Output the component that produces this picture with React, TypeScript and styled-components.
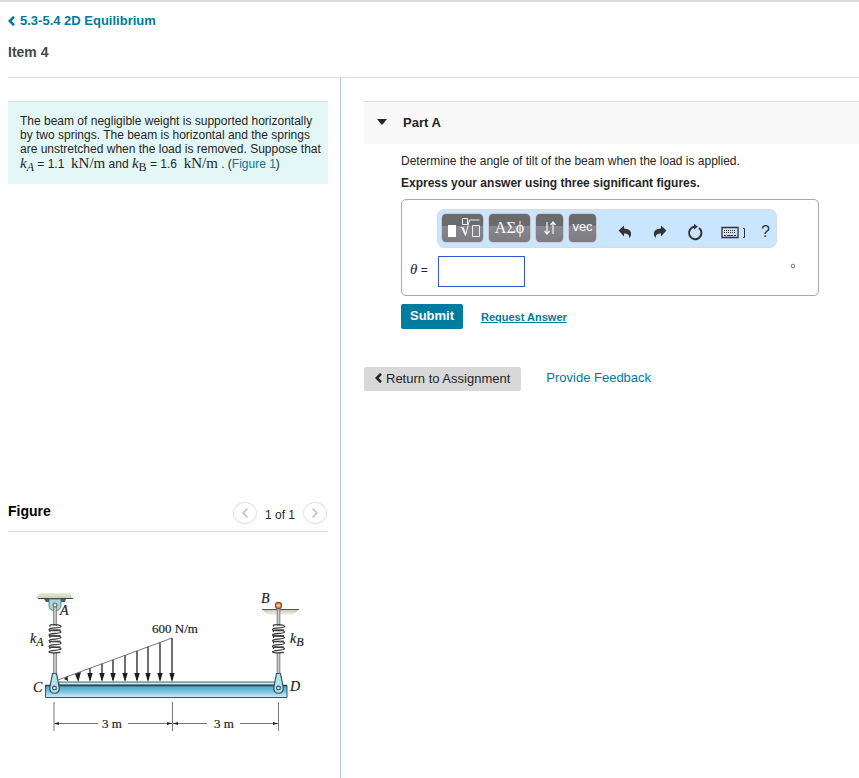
import React, { useState } from "react";
import styled, { createGlobalStyle, css } from "styled-components";

const GlobalStyle = createGlobalStyle`
  * { box-sizing: border-box; }
  body {
    margin: 0;
    background: #fff;
    color: #252525;
    font-family: "Liberation Sans", Arial, sans-serif;
    font-size: 12px;
    line-height: 14px;
  }
  button, input { font-family: inherit; }
  h1, h2, p { margin: 0; }
`;

const teal = "#007a9c";

const Page = styled.div`
  display: flex;
  flex-direction: column;
  min-height: 100vh;
  border-top: 2px solid #dcdcdc;
`;

const Header = styled.header`
  margin-left: 8px;
  height: 76px;
  padding-top: 11px;
  border-bottom: 1px solid #dcdfe0;
`;

const BackLink = styled.a`
  display: flex;
  align-items: center;
  gap: 5px;
  width: fit-content;
  color: ${teal};
  font-size: 13px;
  line-height: 16px;
  font-weight: bold;
  text-decoration: none;
`;

const ItemTitle = styled.h1`
  margin-top: 14px;
  color: #474747;
  font-size: 14px;
  line-height: 18px;
`;

const Columns = styled.div`
  flex: 1;
  display: grid;
  grid-template-columns: 341px minmax(0, 1fr);
`;

const ProblemColumn = styled.section`
  display: flex;
  flex-direction: column;
  padding: 23px 12px 0 8px;
  border-right: 1px solid #b5cde0;
`;

const Prompt = styled.div`
  padding: 12px 12px 13px;
  border-top: 1px solid #d5dede;
  background: #e3f7f7;
`;

const PromptText = styled.p`
  white-space: nowrap;
`;

const MathText = styled.span`
  font-family: "Liberation Serif", "Times New Roman", serif;
  font-size: 15px;
  line-height: 14px;

  sub {
    font-size: 12px;
    line-height: 0;
    vertical-align: -3px;
  }
`;

const TextLink = styled.a`
  color: ${teal};
  text-decoration: none;
`;

const FigurePanel = styled.section`
  margin-top: auto;
  height: 280px;
`;

const FigureHeader = styled.div`
  display: flex;
  align-items: center;
  height: 34px;
  padding: 0 1px 3px 0;
  border-bottom: 1px solid #dcdfe0;
`;

const FigureTitle = styled.h2`
  margin: 0 auto 4px 0;
  color: #000;
  font-size: 14px;
  line-height: 18px;
`;

const PageCount = styled.span`
  padding: 3px 8px 0;
`;

const PagerButton = styled.button`
  display: grid;
  place-items: center;
  width: 24px;
  height: 22px;
  padding: 0;
  border: 1px solid #e2e2e2;
  border-radius: 50%;
  background: #fff;
`;

const Diagram = styled.svg`
  display: block;
  width: 100%;
  margin-top: 48px;

  text {
    font-family: "Liberation Serif", "Times New Roman", serif;
    font-size: 13px;
    fill: #231f20;
    stroke: #231f20;
    stroke-width: 0.2px;
  }
  text.symbol { font-style: italic; font-size: 14px; }
`;

const AnswerColumn = styled.main`
  padding: 23px 0 0 23px;
`;

const PartHeader = styled.button`
  display: flex;
  align-items: center;
  gap: 16px;
  width: 100%;
  height: 43px;
  padding: 0 13px 2px;
  border: 0;
  border-top: 1px solid #dcdfe0;
  background: #f9f9f9;
  color: #252525;
  font-size: 13px;
  font-weight: bold;
`;

const PartBody = styled.div`
  padding: 6px 40px 0 37px;
`;

const Paragraph = styled.p<{ $strong?: boolean }>`
  padding: 4px 0;
  margin-bottom: ${(p) => (p.$strong ? 5 : 0)}px;
  font-weight: ${(p) => (p.$strong ? "bold" : "normal")};
`;

const AnswerBox = styled.div`
  height: 97px;
  padding: 9px 10px 8px 8px;
  border: 1px solid #a9a9a9;
  border-radius: 5px;
`;

const Toolbar = styled.div`
  display: flex;
  align-items: center;
  width: 340px;
  height: 39px;
  margin-left: 27px;
  padding: 0 4px 1px 3px;
  border: 1px solid #dadada;
  border-radius: 7px;
  background: #c9e5ff;
`;

const MathButton = styled.button<{ $wide?: boolean }>`
  display: grid;
  place-items: center;
  width: ${(p) => (p.$wide ? 43 : 29)}px;
  height: 30px;
  margin-right: 4px;
  padding: 0;
  border: 1px solid #c9cbce;
  border-radius: 5px;
  background: linear-gradient(#6b6b6d 0 42%, #89888f 42%, #7c7b82);
  color: #fff;
  font-size: 13px;
  line-height: 16px;
`;

const Greek = styled.span`
  font-family: "Liberation Serif", "Times New Roman", serif;
  font-size: 16px;
`;

const VecLabel = styled.span`
  padding-bottom: 3px;
`;

const ActionIcons = styled.div`
  display: flex;
  align-items: center;
  gap: 13px;
  flex: 1;
  padding: 7px 2px 0 13px;
`;

const IconButton = styled.button`
  display: grid;
  place-items: center;
  min-width: 22px;
  height: 20px;
  padding: 0;
  border: 0;
  background: none;
  color: #333;
  font-size: 16px;

  &:last-child {
    min-width: 0;
    margin-left: auto;
  }
`;

const AnswerRow = styled.div`
  display: flex;
  align-items: center;
  height: 32px;
  margin-top: 7px;
`;

const ThetaLabel = styled.label`
  width: 28px;
  padding-bottom: 3px;
  i {
    font-family: "Liberation Serif", "Times New Roman", serif;
    font-size: 15px;
  }
`;

const AnswerInput = styled.input`
  width: 87px;
  height: 31px;
  padding: 4px 6px;
  border: 1px solid #3159cf;
  border-radius: 0;
  font-size: 14px;
  outline: 0;
`;

const Unit = styled.span`
  display: flex;
  align-items: flex-start;
  height: 16px;
  margin: 0 12px 0 auto;
`;

const ActionRow = styled.div<{ $footer?: boolean }>`
  display: flex;
  align-items: center;
  gap: 18px;
  margin-top: 8px;
  ${(p) =>
    p.$footer &&
    css`
      gap: 25px;
      margin-top: 38px;
      font-size: 13px;
    `}
`;

const SubmitButton = styled.button`
  width: 62px;
  height: 25px;
  padding: 0 0 2px;
  border: 0;
  border-radius: 2px;
  background: #007c9f;
  color: #fff;
  font-size: 13px;
  font-weight: bold;
`;

const RequestLink = styled.a`
  color: ${teal};
  font-size: 11px;
  font-weight: bold;
`;

const ReturnButton = styled.button`
  display: flex;
  align-items: center;
  gap: 4px;
  height: 24px;
  padding: 0 11px 2px;
  border: 0;
  border-radius: 2px;
  background: #d8d8d8;
  color: #252525;
  font-size: 13px;
`;

const FeedbackLink = styled(TextLink)`
  padding-bottom: 2px;
`;

function BoldChevron() {
  return (
    <svg width="7" height="10" viewBox="0 0 7 10" fill="none" stroke="currentColor" strokeWidth="2.6" aria-hidden="true">
      <path d="M6 .8 1.8 5 6 9.2" />
    </svg>
  );
}

function ThinChevron({ direction }: { direction: "left" | "right" }) {
  return (
    <svg width="8" height="12" viewBox="0 0 8 12" fill="none" stroke="#b9b9b9" strokeWidth="1.4" aria-hidden="true">
      <path d={direction === "left" ? "M6.5 1.5 2 6l4.500 4.500" : "M1.500 1.500 6 6l-4.500 4.500"} />
    </svg>
  );
}

function CurvedArrow({ flip }: { flip?: boolean }) {
  return (
    <svg width="14" height="14" viewBox="0 0 14 14" fill="#333" aria-hidden="true">
      <path
        transform={flip ? "matrix(-1 0 0 1 14 0)" : undefined}
        d="M.6 5.500 6 .6v2.900c4.500 .1 7.100 2.200 7.100 5.300 0 1.900-.7 3.300-1.900 4.400.6-3.300-1.400-4.800-5.200-4.800v3Z"
      />
    </svg>
  );
}

function BeamArrow({ x, top }: { x: number; top: number }) {
  return (
    <g>
      <path d={`M${x} ${top}V680`} stroke="#333" strokeWidth={1.4} />
      <path d={`M${x} 682l-2.700-9h5.400Z`} fill="#1d1d1d" />
    </g>
  );
}

function Spring({ x }: { x: number }) {
  const turns = [0, 1, 2, 3, 4];
  return (
    <g>
      <path d={`M${x} 606v20M${x} 653v25`} stroke="#777" strokeWidth="3.600" />
      <path d={`M${x} 606v20M${x} 653v25`} stroke="#ccc" strokeWidth="1.800" />
      <g fill="none" stroke="#3d3d3d" strokeWidth="1.300" strokeLinecap="round">
        {turns.map((i) => {
          const y = 626 + i * 5.6;
          return (
            <path
              key={i}
              d={`M${x - 5} ${y}c-2-2.200 11-1.600 11 .4s-12 1-12 3c0 1.400 6 1.300 11 .600`}
            />
          );
        })}
      </g>
    </g>
  );
}

function Clevis({ x }: { x: number }) {
  return (
    <g stroke="#35515c" strokeWidth="1.200">
      <path d={`M${x - 2} 673.500h4l2.700 14a4.800 4.800 0 1 1-9.400 0Z`} fill="#b4e0ef" />
      <circle cx={x} cy="688" r="1.900" fill="#d8eff7" />
    </g>
  );
}

function BeamFigure() {
  const slope = (x: number) => 680 - ((x - 58) * 42) / 114;
  const arrows = [90, 102, 113, 125, 137, 148, 160, 172];
  return (
    <Diagram viewBox="8 580 320 160" role="img" aria-label="Beam CD supported by springs at A and B">
      <defs>
        <linearGradient id="beam" x2="0" y2="1">
          <stop offset="0" stopColor="#3ba3c6" />
          <stop offset=".5" stopColor="#7cc5de" />
          <stop offset="1" stopColor="#d6edf5" />
        </linearGradient>
        <linearGradient id="ceiling" x2="0" y2="1">
          <stop offset="0" stopColor="#e9e9dc" />
          <stop offset="1" stopColor="#c9cab5" />
        </linearGradient>
        <linearGradient id="ledge" x2="0" y2="1">
          <stop offset="0" stopColor="#c9cab5" />
          <stop offset="1" stopColor="#f4f4ec" />
        </linearGradient>
      </defs>

      <path d="M40 593h30l2 3-1 3H39q-5-1-1-4Z" fill="url(#ceiling)" />
      <path d="M38 598.500h35" stroke="#444" />
      <path d="M44 599h5v3h-3ZM61 599h5l-1 3h-4Z" fill="#41616b" />
      <path d="M49 599h12v6.500a6 5.500 0 0 1-12 0Z" fill="#a9d5d8" stroke="#48686e" strokeWidth=".8" />
      <Spring x={55} />
      <circle cx="55" cy="605" r="2" fill="#eee" stroke="#555" />

      <path d="M263 610h35q-2 5-10 5h-15q-8 0-10-5Z" fill="url(#ledge)" />
      <path d="M262 609.500h37" stroke="#555" />
      <Spring x={278.5} />
      <circle cx="278.500" cy="605.500" r="3" fill="#f5b58f" stroke="#964921" strokeWidth="1.400" />

      <path d="M59 682h218v3H59Z" fill="#c3e6f1" stroke="#4f666e" />
      <path d="M45.500 685.500h241.500v12H45.500Z" fill="url(#beam)" stroke="#3b5661" />
      <path d="M45 685.500h242" stroke="#234550" strokeWidth="1.500" />

      <path d="M58 680 172 638" stroke="#777" />
      <path d="m64 679 3.500-3 .5 5Z" fill="#222" />
      <path d="M78.300 682l-3.300-8 6-2Z" fill="#222" />
      {arrows.map((x) => (
        <BeamArrow key={x} x={x} top={slope(x)} />
      ))}
      <Clevis x={54.5} />
      <Clevis x={278.5} />

      <path
        d="M54 702v29M172.500 702v29M278.500 702v29M55 723.500h43M128 723.500h79M240 723.500h38"
        stroke="#777"
      />
      <path d="m54 723.500 5-1.500v3ZM172 723.500l-5-1.500v3ZM173 723.500l5-1.500v3ZM278 723.500l-5-1.500v3Z" fill="#222" />
      <text x="102" y="728">3 m</text>
      <text x="214" y="728">3 m</text>
      <text x="152" y="633">600 N/m</text>
      <text className="symbol" x="60" y="615">A</text>
      <text className="symbol" x="261" y="603">B</text>
      <text className="symbol" x="33" y="692">C</text>
      <text className="symbol" x="290" y="691">D</text>
      <text className="symbol" x="30" y="643">k<tspan fontSize="12" dy="3">A</tspan></text>
      <text className="symbol" x="290" y="643">k<tspan fontSize="12" dy="3">B</tspan></text>
    </Diagram>
  );
}

export default function App() {
  const [answer, setAnswer] = useState("");
  return (
    <>
      <GlobalStyle />
      <Page>
        <Header>
          <BackLink href="#assignment"><BoldChevron />5.3-5.4 2D Equilibrium</BackLink>
          <ItemTitle>Item 4</ItemTitle>
        </Header>
        <Columns>
          <ProblemColumn>
            <Prompt>
              <PromptText>
                The beam of negligible weight is supported horizontally<br />
                by two springs. The beam is horizontal and the springs<br />
                are unstretched when the load is removed. Suppose that<br />
                <MathText><i>k</i><sub><i>A</i></sub></MathText> = 1.1&nbsp; <MathText>kN/m</MathText> and{" "}
                <MathText><i>k</i><sub>B</sub></MathText> = 1.6&nbsp; <MathText>kN/m</MathText> . (<TextLink href="#figure">Figure 1</TextLink>)
              </PromptText>
            </Prompt>
            <FigurePanel id="figure">
              <FigureHeader>
                <FigureTitle>Figure</FigureTitle>
                <PagerButton aria-label="Previous figure"><ThinChevron direction="left" /></PagerButton>
                <PageCount>1 of 1</PageCount>
                <PagerButton aria-label="Next figure"><ThinChevron direction="right" /></PagerButton>
              </FigureHeader>
              <BeamFigure />
            </FigurePanel>
          </ProblemColumn>
          <AnswerColumn>
            <PartHeader aria-expanded="true">
              <svg width="10" height="6" viewBox="0 0 10 6" aria-hidden="true"><path d="M0 0h10L5.500 5.500h-1Z" fill="#252525" /></svg>
              Part A
            </PartHeader>
            <PartBody>
              <Paragraph>Determine the angle of tilt of the beam when the load is applied.</Paragraph>
              <Paragraph $strong>Express your answer using three significant figures.</Paragraph>
              <AnswerBox>
                <Toolbar role="toolbar" aria-label="Equation tools">
                  <MathButton $wide aria-label="Templates">
                    <svg width="36" height="24" viewBox="0 0 36 24" fill="none" stroke="#eee" aria-hidden="true">
                      <path d="M3 9h8v12H3Z" fill="#fff" stroke="none" />
                      <path d="M17.500 2.500h5v6h-5ZM27.500 9.500h7v11h-7ZM15.500 11.500h2l3 8 4-15.500h10" />
                      <path d="m17.500 11.500 3 7" strokeWidth="2" />
                    </svg>
                  </MathButton>
                  <MathButton $wide aria-label="Greek symbols"><Greek>ΑΣϕ</Greek></MathButton>
                  <MathButton aria-label="Sub and superscript">
                    <svg width="14" height="16" viewBox="0 0 14 16" fill="none" stroke="#f5f5f5" strokeWidth="1.200" aria-hidden="true">
                      <path d="M4 2v12M1.500 11 4 14l2.500-3M10 14V2M7.500 5 10 2l2.500 3" />
                    </svg>
                  </MathButton>
                  <MathButton><VecLabel>vec</VecLabel></MathButton>
                  <ActionIcons>
                    <IconButton aria-label="Undo"><CurvedArrow /></IconButton>
                    <IconButton aria-label="Redo"><CurvedArrow flip /></IconButton>
                    <IconButton aria-label="Reset">
                      <svg width="16" height="18" viewBox="0 0 16 18" fill="none" stroke="#333" aria-hidden="true">
                        <path d="M12 5A6.200 6.200 0 1 1 7.500 3.800" strokeWidth="2" />
                        <path d="m7 .8 3.800 2.900L7 6.500Z" fill="#333" stroke="none" />
                      </svg>
                    </IconButton>
                    <IconButton aria-label="Keyboard shortcuts">
                      <svg width="28" height="14" viewBox="-2 -2 28 14" fill="none" stroke="#333" aria-hidden="true">
                        <path d="M1 .5h16v10H1Z" strokeWidth="1.300" />
                        <path d="M3 3.500h12M3 5.500h12" strokeDasharray="1 1" />
                        <path d="M3 8.500h2M6 8.500h6M13 8.500h2M22 1.500h1.500v9H22" />
                      </svg>
                    </IconButton>
                    <IconButton aria-label="Help">?</IconButton>
                  </ActionIcons>
                </Toolbar>
                <AnswerRow>
                  <ThetaLabel htmlFor="theta"><i>θ</i> =</ThetaLabel>
                  <AnswerInput id="theta" value={answer} onChange={(e) => setAnswer(e.target.value)} />
                  <Unit>
                    <svg width="6" height="6" viewBox="0 0 6 6" aria-label="degrees">
                      <circle cx="3" cy="3" r="1.800" fill="none" stroke="#777" />
                    </svg>
                  </Unit>
                </AnswerRow>
              </AnswerBox>
              <ActionRow>
                <SubmitButton>Submit</SubmitButton>
                <RequestLink href="#answer">Request Answer</RequestLink>
              </ActionRow>
            </PartBody>
            <ActionRow $footer>
              <ReturnButton><BoldChevron />Return to Assignment</ReturnButton>
              <FeedbackLink href="#feedback">Provide Feedback</FeedbackLink>
            </ActionRow>
          </AnswerColumn>
        </Columns>
      </Page>
    </>
  );
}
